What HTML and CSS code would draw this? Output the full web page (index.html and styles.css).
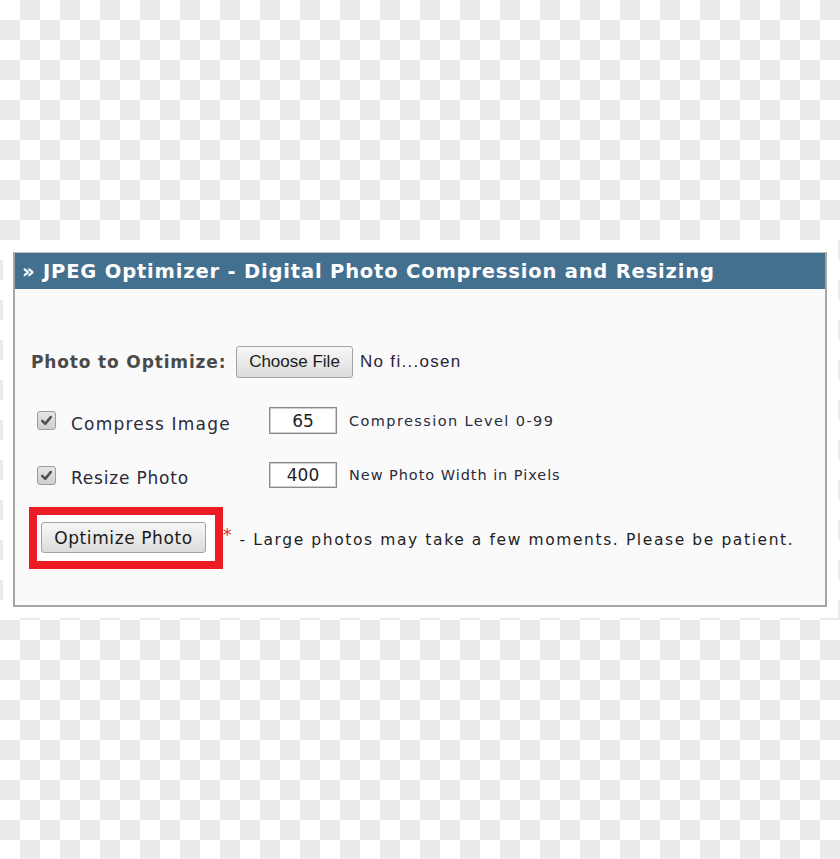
FILE: index.html
```html
<!DOCTYPE html>
<html>
<head>
<meta charset="utf-8">
<link rel="stylesheet" href="styles.css">
</head>
<body>
<div class="canvas">
  <div class="panel">
    <div class="panel-head">» JPEG Optimizer - Digital Photo Compression and Resizing</div>
    <div class="panel-body">
      <div class="row row-file">
        <span class="field-label">Photo to Optimize:</span>
        <span class="btn btn-file">Choose File</span>
        <span class="file-name">No fi...osen</span>
      </div>
      <div class="row row-opt row-compress">
        <span class="check"><svg viewBox="0 0 20 20" width="20" height="20"><path d="M5 10.5 L8.5 14 L15 6" fill="none" stroke="#505050" stroke-width="3" stroke-linecap="round" stroke-linejoin="round"/></svg></span>
        <span class="opt-label">Compress Image</span>
        <span class="num-box">65</span>
        <span class="opt-hint hint-compress">Compression Level 0-99</span>
      </div>
      <div class="row row-opt row-resize">
        <span class="check"><svg viewBox="0 0 20 20" width="20" height="20"><path d="M5 10.5 L8.5 14 L15 6" fill="none" stroke="#505050" stroke-width="3" stroke-linecap="round" stroke-linejoin="round"/></svg></span>
        <span class="opt-label label-resize">Resize Photo</span>
        <span class="num-box">400</span>
        <span class="opt-hint hint-resize">New Photo Width in Pixels</span>
      </div>
      <div class="row row-submit">
        <div class="highlight"><span class="btn btn-submit">Optimize Photo</span></div>
        <span class="star">*</span>
        <span class="note">- Large photos may take a few moments. Please be patient.</span>
      </div>
    </div>
  </div>
</div>
</body>
</html>
```
FILE: styles.css
```css
html, body {
  margin: 0;
  padding: 0;
}
body {
  width: 840px;
  height: 859px;
  overflow: hidden;
  background-color: #fff;
  background-image: conic-gradient(#ebebeb 25%, #fff 0 50%, #ebebeb 0 75%, #fff 0);
  background-size: 40px 40px;
  font-family: "DejaVu Sans", Verdana, sans-serif;
}
.canvas {
  margin: 240px 0 0 3px;
  width: 835px;
  height: 378px;
  background: #fff;
  padding: 12px 0 0 10px;
  box-sizing: border-box;
}
.panel {
  width: 814px;
  height: 355px;
  box-sizing: border-box;
  border: 2px solid #a6a6a6;
  border-top: 1px solid #bdbdbd;
  background: #fafafa;
}
.panel-head {
  height: 36px;
  background: #44708f;
  color: #fff;
  font-weight: bold;
  font-size: 19.5px;
  line-height: 37px;
  padding-left: 7px;
  white-space: nowrap;
  letter-spacing: 0.82px;
}
.panel-body {
  padding-left: 16px;
}
.row {
  display: flex;
  align-items: center;
}
.row-file {
  margin-top: 57px;
  height: 32px;
}
.field-label {
  width: 205px;
  font-weight: bold;
  font-size: 17px;
  letter-spacing: 0.85px;
  color: #4a4a4a;
}
.btn {
  box-sizing: border-box;
  display: flex;
  align-items: center;
  justify-content: center;
  background: linear-gradient(#f7f7f7, #dcdcdc);
  border: 1px solid #a3a3a3;
  border-radius: 3px;
  color: #1a1a1a;
}
.btn-file {
  width: 117px;
  height: 32px;
  font-family: "Liberation Sans", Arial, sans-serif;
  font-size: 17px;
}
.file-name {
  margin-left: 7px;
  font-family: "Liberation Sans", Arial, sans-serif;
  font-size: 17px;
  letter-spacing: 1.3px;
  color: #2a1f3a;
}
.row-compress {
  margin-top: 29px;
  height: 27px;
}
.row-resize {
  margin-top: 28px;
  height: 26px;
}
.check {
  box-sizing: border-box;
  width: 19px;
  height: 19px;
  margin-left: 6px;
  border: 1px solid #9c9c9c;
  border-radius: 3px;
  background: linear-gradient(#e6e6e6, #cfcfcf);
  display: flex;
  align-items: center;
  justify-content: center;
  overflow: hidden;
}
.check svg {
  width: 17px;
  height: 17px;
}
.opt-label {
  width: 198px;
  margin-left: 15px;
  padding-top: 6px;
  font-size: 17px;
  letter-spacing: 1.2px;
  color: #2b2b3a;
}
.label-resize {
  letter-spacing: 0.8px;
}
.num-box {
  box-sizing: border-box;
  width: 68px;
  height: 100%;
  border: 1px solid #8a8a8a;
  box-shadow: inset 0 0 0 1px #cfcfcf;
  background: #fff;
  display: flex;
  align-items: center;
  justify-content: center;
  font-size: 17px;
  color: #222;
}
.opt-hint {
  margin-left: 12px;
  font-size: 14.5px;
  color: #2b2b3a;
}
.hint-compress {
  letter-spacing: 1.4px;
}
.hint-resize {
  letter-spacing: 0.95px;
}
.row-submit {
  margin-top: 19px;
  height: 62px;
  margin-left: -2px;
}
.highlight {
  box-sizing: border-box;
  width: 194px;
  height: 62px;
  border: 8px solid #ed1c24;
  background: #fff;
  padding: 7px 9px 8px 4px;
}
.btn-submit {
  width: 165px;
  height: 31px;
  font-size: 17px;
  letter-spacing: 0.6px;
}
.star {
  align-self: flex-start;
  margin-top: 18px;
  margin-left: 0;
  color: #e03030;
  font-size: 17px;
}
.note {
  margin-left: 8px;
  padding-top: 3px;
  font-size: 15.5px;
  letter-spacing: 1.6px;
  color: #1e1e1e;
}
```
